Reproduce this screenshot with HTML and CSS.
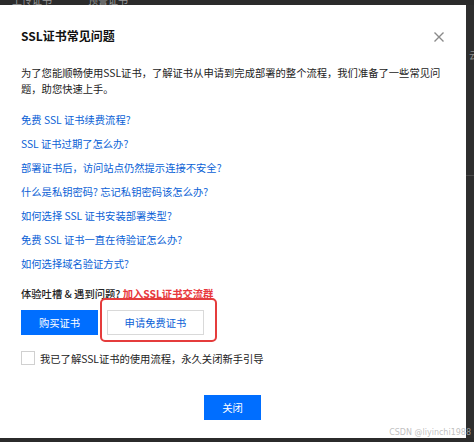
FILE: index.html
```html
<!DOCTYPE html>
<html lang="zh-CN">
<head>
<meta charset="utf-8">
<title>SSL证书常见问题</title>
<link rel="stylesheet" href="styles.css">
</head>
<body>
<div class="topbar">
  <span class="tab">上传证书</span>
  <span class="tab tab2">预警证书</span>
</div>
<div class="stage">
  <div class="dialog">
    <div class="head">
      <h1 class="title">SSL证书常见问题</h1>
      <svg class="close" width="10" height="10" viewBox="0 0 10 10"><path d="M0.5 0.5 L9.5 9.5 M9.5 0.5 L0.5 9.5" stroke="#8a8a8a" stroke-width="1.4" fill="none"/></svg>
    </div>
    <p class="intro">为了您能顺畅使用SSL证书，了解证书从申请到完成部署的整个流程，我们准备了一些常见问题，助您快速上手。</p>
    <ul class="links">
      <li><a>免费 SSL 证书续费流程?</a></li>
      <li><a>SSL 证书过期了怎么办?</a></li>
      <li><a>部署证书后，访问站点仍然提示连接不安全?</a></li>
      <li><a>什么是私钥密码? 忘记私钥密码该怎么办?</a></li>
      <li><a>如何选择 SSL 证书安装部署类型?</a></li>
      <li><a>免费 SSL 证书一直在待验证怎么办?</a></li>
      <li><a>如何选择域名验证方式?</a></li>
    </ul>
    <p class="feedback">体验吐槽 &amp; 遇到问题? <a class="red">加入SSL证书交流群</a></p>
    <div class="actions">
      <button class="btn primary buy">购买证书</button>
      <button class="btn ghost">申请免费证书</button>
    </div>
    <label class="check"><span class="box"></span>我已了解SSL证书的使用流程，永久关闭新手引导</label>
    <div class="footer"><button class="btn primary closebtn">关闭</button></div>
    <div class="mark"></div>
  </div>
  <div class="side"><span class="sidechar">云</span><span class="sideline"></span></div>
</div>
<div class="watermark">CSDN @liyinchi1988</div>
</body>
</html>
```
FILE: styles.css
```css
html, body {
  margin: 0;
  padding: 0;
}
body {
  width: 474px;
  height: 442px;
  overflow: hidden;
  background: #2b2b2b;
  font-family: "Noto Sans CJK SC", "Noto Sans", sans-serif;
  position: relative;
}
.topbar {
  height: 5px;
  overflow: hidden;
  display: flex;
  align-items: flex-end;
  padding-left: 12px;
}
.tab {
  font-size: 10px;
  line-height: 12px;
  color: #9a9a9a;
  flex: none;
  margin-bottom: -1px;
}
.tab2 {
  margin-left: 36px;
}
.stage {
  display: flex;
  height: 433px;
}
.dialog {
  width: 466px;
  height: 433px;
  background: #fff;
  position: relative;
  box-sizing: border-box;
  padding-left: 21px;
  padding-top: 24px;
  flex: none;
}
.head {
  display: flex;
  align-items: center;
  height: 14px;
  padding-right: 22px;
}
.title {
  margin: 0;
  flex: 1;
  font-size: 12px;
  line-height: 14px;
  font-weight: 700;
  color: #111;
}
.close {
  display: block;
  margin-top: 2px;
}
.intro {
  margin: 22px 21px 0 0;
  font-size: 10.3px;
  line-height: 15.6px;
  color: #222;
}
.links {
  list-style: none;
  margin: 12px 0 0;
  padding: 0;
}
.links li {
  font-size: 10.3px;
  line-height: 24px;
  height: 24px;
}
.links a {
  color: #0a5fd6;
}
.feedback {
  margin: 10px 0 0;
  font-size: 10.3px;
  line-height: 16px;
  color: #222;
  font-weight: 500;
}
.red {
  color: #e8383d;
  font-weight: 700;
}
.actions {
  display: flex;
  gap: 9px;
  margin-top: 8px;
}
.btn {
  height: 25px;
  font-family: inherit;
  font-size: 10.3px;
  border-radius: 0;
  padding: 0;
  box-sizing: border-box;
}
.primary {
  background: #006eff;
  color: #fff;
  border: none;
}
.buy {
  width: 77px;
}
.ghost {
  width: 97px;
  background: #fff;
  border: 1px solid #d9d9d9;
  color: #0a5fd6;
}
.check {
  display: flex;
  align-items: center;
  margin-top: 16px;
  height: 14px;
  font-size: 10.3px;
  color: #222;
}
.box {
  width: 12px;
  height: 12px;
  border: 1px solid #d0d0d0;
  margin-right: 5px;
  flex: none;
}
.footer {
  margin-top: 28px;
  padding-left: 183px;
}
.closebtn {
  width: 57px;
}
.mark {
  position: absolute;
  left: 100px;
  top: 293px;
  width: 117px;
  height: 44px;
  box-sizing: border-box;
  border: 2.5px solid #e53c3c;
  border-radius: 5px;
}
.side {
  flex: 1;
  position: relative;
  background: #2e2e2e;
}
.sidechar {
  position: absolute;
  left: 3px;
  top: 42px;
  font-size: 10px;
  color: #8a8a8a;
}
.sideline {
  position: absolute;
  left: 0;
  right: 0;
  top: 170px;
  height: 1px;
  background: #4a4a4a;
}
.watermark {
  position: absolute;
  right: 3px;
  bottom: 5px;
  font-family: "DejaVu Sans", sans-serif;
  font-size: 8px;
  color: rgba(180, 180, 180, 0.85);
  letter-spacing: 0;
}
```
